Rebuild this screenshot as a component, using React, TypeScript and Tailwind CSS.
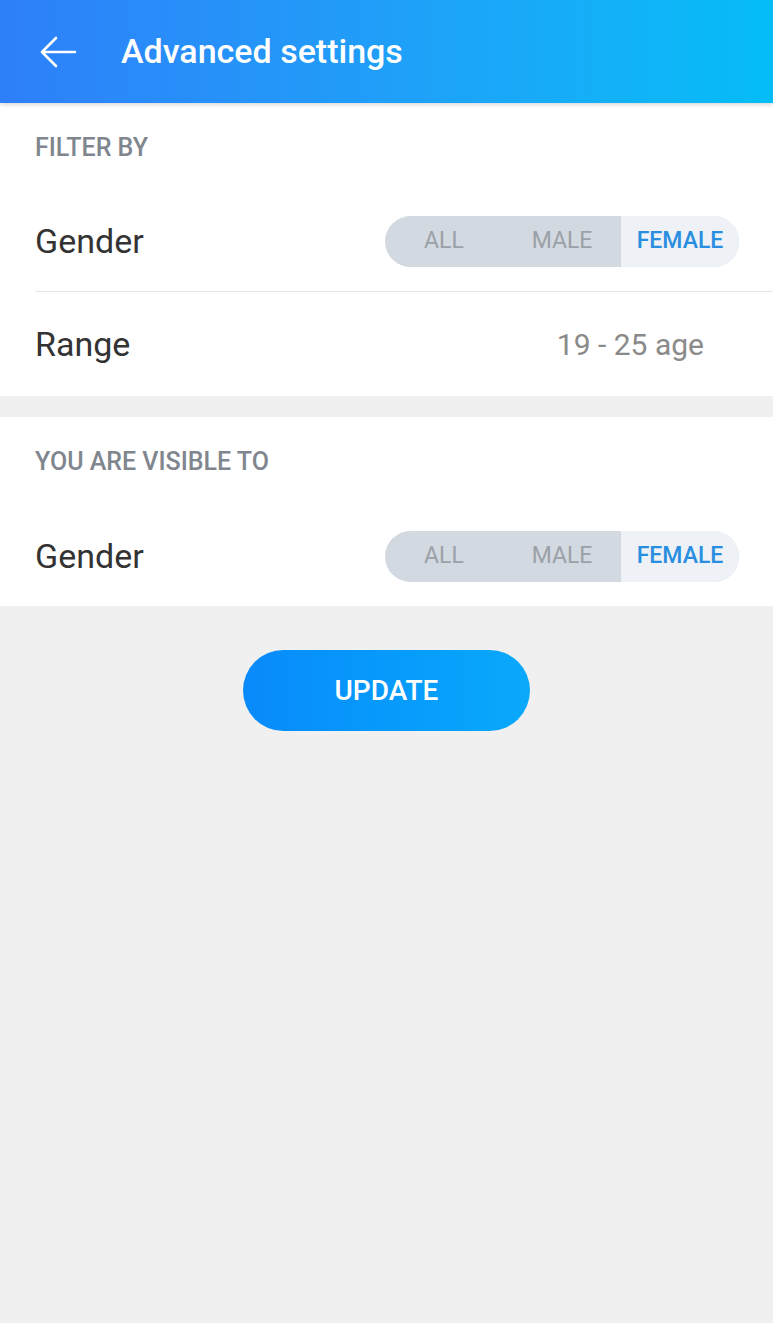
import React, { useState } from "react";

type Gender = "ALL" | "MALE" | "FEMALE";

function Segmented({ value, onChange }: { value: Gender; onChange: (g: Gender) => void }) {
  const opts: Gender[] = ["ALL", "MALE", "FEMALE"];
  return (
    <div className="flex h-[51px] w-[354px] overflow-hidden rounded-full bg-[#d3d9e0]">
      {opts.map((o) => (
        <button
          key={o}
          onClick={() => onChange(o)}
          className={
            o === value
              ? "flex-1 bg-[#eef2f6] text-[23px] font-medium text-[#2a8ee0]"
              : "flex-1 text-[23px] text-[#9ba1a8]"
          }
        >
          {o}
        </button>
      ))}
    </div>
  );
}

export default function App() {
  const [filter, setFilter] = useState<Gender>("FEMALE");
  const [visible, setVisible] = useState<Gender>("FEMALE");

  return (
    <div className="min-h-[1323px] bg-[#f0f0f1] font-['Roboto',sans-serif]">
      {/* header */}
      <div className="relative z-10 flex h-[103px] items-center bg-gradient-to-r from-[#2e7ff9] to-[#04bdf7] shadow-[0_2px_4px_rgba(0,0,0,0.15)]">
        <button className="ml-[38px] flex h-10 w-10 items-center justify-center">
          <svg width="40" height="40" viewBox="0 0 40 40" fill="none" stroke="white" strokeWidth="2.6" strokeLinecap="round" strokeLinejoin="round">
            <path d="M37 20H4M18 6L4 20l14 14" />
          </svg>
        </button>
        <h1 className="ml-[43px] text-[34px] font-medium text-white">Advanced settings</h1>
      </div>

      {/* filter by */}
      <div className="bg-white">
        <div className="flex h-[89px] items-center px-[35px] text-[25px] font-medium text-[#80868e]">FILTER BY</div>
        <div className="ml-[35px] flex h-[100px] items-center justify-between border-b border-[#e6e6e6] pr-[34px]">
          <span className="text-[34px] text-[#333]">Gender</span>
          <Segmented value={filter} onChange={setFilter} />
        </div>
        <div className="flex h-[104px] items-center justify-between px-[35px] pr-[69px]">
          <span className="text-[34px] text-[#333]">Range</span>
          <span className="text-[30px] text-[#8a8a8a]">19 - 25 age</span>
        </div>
      </div>

      <div className="h-[21px]" />

      {/* visible to */}
      <div className="bg-white">
        <div className="flex h-[89px] items-center px-[35px] text-[25px] font-medium text-[#80868e]">YOU ARE VISIBLE TO</div>
        <div className="flex h-[100px] items-center justify-between pl-[35px] pr-[34px]">
          <span className="text-[34px] text-[#333]">Gender</span>
          <Segmented value={visible} onChange={setVisible} />
        </div>
      </div>

      <div className="flex justify-center pt-[44px]">
        <button className="h-[81px] w-[287px] rounded-full bg-gradient-to-r from-[#0a8afb] to-[#0aa9fb] text-[28px] font-medium text-white">
          UPDATE
        </button>
      </div>
    </div>
  );
}
